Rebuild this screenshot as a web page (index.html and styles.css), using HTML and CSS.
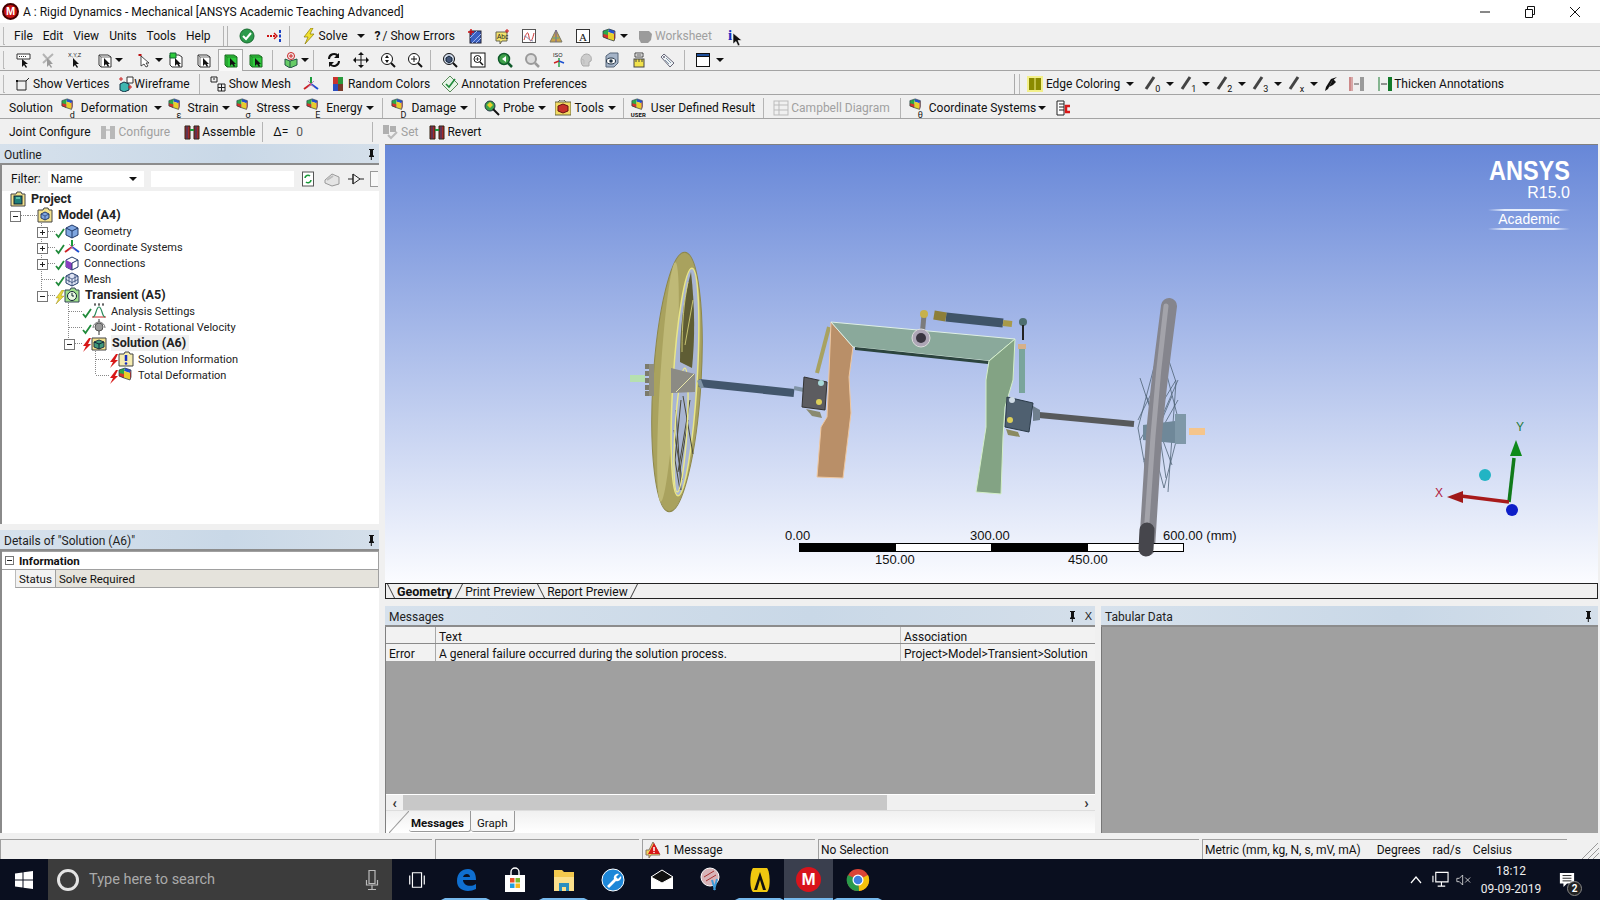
FILE: index.html
```html
<!DOCTYPE html>
<html lang="en">
<head>
  <meta charset="UTF-8">
  <title>A : Rigid Dynamics - Mechanical</title>
  <link rel="stylesheet" href="styles.css">
</head>
<body>
<svg class="defs" aria-hidden="true">
  <symbol id="check" viewBox="0 0 16 16"><circle cx="8" cy="8" r="7" fill="#2c9a4b" stroke="#176b2f"/><path d="M4 8l3 3 5-6" fill="none" stroke="#fff" stroke-width="2"/></symbol>
  <symbol id="link" viewBox="0 0 16 16"><path d="M1 8h9" stroke="#c11" stroke-width="2" stroke-dasharray="2 1"/><path d="M8 5l3 3-3 3" fill="none" stroke="#c11" stroke-width="1.4"/><path d="M13 2h2v3h-2zM13 6.500h2v3h-2zM13 11h2v3h-2z" fill="#1a3fc4"/></symbol>
  <symbol id="bolt" viewBox="0 0 16 16"><path d="M10 0 3 9h4l-3 7 9-10H9l3-6z" fill="#f0e030" stroke="#8a7a00" stroke-width=".7"/></symbol>
  <symbol id="hatch" viewBox="0 0 16 16"><rect x="3" y="3" width="11" height="12" fill="#3a5fc0" stroke="#223"/><path d="M5 15l9-9M3 10l7-7M9 15l5-5" stroke="#9fb6ee"/><path d="M1 4h6M4 1v6" stroke="#c11" stroke-width="1.400"/></symbol>
  <symbol id="abc" viewBox="0 0 16 16"><path d="M1 4h11v9H7l-2 3v-3H1z" fill="#f3e46a" stroke="#665"/><path d="M12 1v4M10 3h4" stroke="#c11"/><text x="2" y="11" font-size="6.500" font-family="Liberation Sans" fill="#222">Abc</text></symbol>
  <symbol id="chart" viewBox="0 0 16 16"><rect x="1.500" y="1.500" width="13" height="13" fill="#fff" stroke="#555"/><path d="M3 12c3-9 4-9 5-3s3 5 5-4" fill="none" stroke="#c33"/><path d="M3 8c3 0 5 5 9 5" fill="none" stroke="#88a"/></symbol>
  <symbol id="pyr" viewBox="0 0 16 16"><path d="M8 2 2 14h12z" fill="#c9a24a" stroke="#776"/><path d="M8 2v12" stroke="#6a5ca8"/><path d="M5 10h6" stroke="#5a8"/></symbol>
  <symbol id="abox" viewBox="0 0 16 16"><rect x="1.500" y="1.500" width="13" height="13" fill="#fff" stroke="#333"/><text x="4" y="12.500" font-size="11" font-family="Liberation Serif" fill="#111">A</text></symbol>
  <symbol id="cube" viewBox="0 0 16 16"><path d="M7 1l6 2-1 3-6-2z" fill="#2550d0"/><path d="M6 4l6 2v7l-6-2z" fill="#e7cf2b"/><path d="M1 3l6-2-1 3v7L1 9z" fill="#2ba84a"/><path d="M1 6l5 1v4L1 9z" fill="#d5342c"/><path d="M12 6l1-3v7l-1 3z" fill="#d5342c"/><path d="M7 1l6 2v7l-1 3-6-2-5-2V3z" fill="none" stroke="#234" stroke-width=".7"/></symbol>
  <symbol id="blob" viewBox="0 0 16 16"><path d="M2 3h10l3 3-1 6-3 3H4l-2-4z" fill="#9b9b9b"/></symbol>
  <symbol id="cursor" viewBox="0 0 10 14"><path d="M1 0v11l3-2.500 2 4.500 2-1-2-4.500h4z" fill="#111" stroke="#fff" stroke-width=".6"/></symbol>
  <symbol id="pick100" viewBox="0 0 16 16"><path d="M1 2h13v5H1z" fill="#fff" stroke="#333"/><path d="M3 4.500h8" stroke="#333" stroke-dasharray="1 1"/><path d="M6 7v8l2-2 2 3 1-1-2-3h3z" fill="#111"/></symbol>
  <symbol id="extend" viewBox="0 0 16 16"><path d="M3 2l8 9M13 2 3 11" stroke="#b4b4b4" stroke-width="2"/><path d="M7 6v9l2-2 2 3 1-1-2-3h3z" fill="#9a9a9a"/></symbol>
  <symbol id="xyz" viewBox="0 0 16 16"><text x="0" y="5" font-size="5.500" font-family="Liberation Sans" fill="#222">X,Y,Z</text><path d="M5 6v9l2-2 2 3 1-1-2-3h3z" fill="#111"/></symbol>
  <symbol id="sel" viewBox="0 0 16 16"><path d="M2 3h9l3 2v10H4l-2-2z" fill="#fff" stroke="#333"/><path d="M2 3l2 2h10M4 5v10" fill="none" stroke="#333" stroke-width=".7"/><path d="M7 6v8l2-2 2 3 1-1-1-2h2z" fill="#111"/></symbol>
  <symbol id="selg" viewBox="0 0 16 16"><path d="M2 3h9l3 2v10H4l-2-2z" fill="#2ecb3c" stroke="#1a6a20"/><path d="M2 3l2 2h10M4 5v10" fill="none" stroke="#1a6a20" stroke-width=".7"/><path d="M7 6v8l2-2 2 3 1-1-1-2h2z" fill="#111"/></symbol>
  <symbol id="selv" viewBox="0 0 16 16"><path d="M3 2v2" stroke="#b11" stroke-width="3"/><path d="M4 4v10l3-2 2 3 2-1-2-3h3z" fill="#fff" stroke="#222" stroke-width=".8"/></symbol>
  <symbol id="selb" viewBox="0 0 16 16"><path d="M2 3h9l3 2v10H4l-2-2z" fill="#fff" stroke="#333"/><path d="M2 1h6v5H2z" fill="#2ecb3c" stroke="#163"/><path d="M7 6v8l2-2 2 3 1-1-1-2h2z" fill="#111"/></symbol>
  <symbol id="cubesel" viewBox="0 0 16 16"><circle cx="8" cy="4" r="3.500" fill="none" stroke="#c22"/><path d="M8 2v4M6 4h4" stroke="#c22"/><path d="M2 7l5 2 7-2v6l-7 3-5-3z" fill="#6c6" stroke="#254"/><path d="M7 9v7" stroke="#254"/></symbol>
  <symbol id="rot" viewBox="0 0 16 16"><path d="M3 7a5 5 0 0 1 9-3M13 9a5 5 0 0 1-9 3" fill="none" stroke="#111" stroke-width="2"/><path d="M13 1v5H8zM3 15v-5h5z" fill="#111"/></symbol>
  <symbol id="pan" viewBox="0 0 16 16"><path d="M8 1v14M1 8h14" stroke="#111"/><path d="M8 0l3 3H5zM8 16l3-3H5zM0 8l3-3v6zM16 8l-3-3v6z" fill="#111"/></symbol>
  <symbol id="zoomud" viewBox="0 0 16 16"><circle cx="7" cy="7" r="5.500" fill="#fff" stroke="#111"/><path d="M11 11l4 4" stroke="#111" stroke-width="2"/><path d="M7 3l2 3H5zM7 11l2-3H5z" fill="#111"/></symbol>
  <symbol id="zoomp" viewBox="0 0 16 16"><circle cx="7" cy="7" r="5.500" fill="#fff" stroke="#111"/><path d="M11 11l4 4" stroke="#111" stroke-width="2"/><path d="M7 4v6M4 7h6" stroke="#111"/></symbol>
  <symbol id="zfit" viewBox="0 0 16 16"><circle cx="7" cy="7" r="5.500" fill="#cfd9ea" stroke="#111"/><path d="M11 11l4 4" stroke="#111" stroke-width="2"/><path d="M4 6l3-2 3 2v3l-3 2-3-2z" fill="#457" stroke="#123"/></symbol>
  <symbol id="zbox" viewBox="0 0 16 16"><rect x="1" y="1" width="14" height="14" fill="#fff" stroke="#111"/><circle cx="7.500" cy="7" r="3.500" fill="none" stroke="#111"/><path d="M10 10l3 3" stroke="#111" stroke-width="1.500"/><path d="M7.500 5v4M5.500 7h4" stroke="#111" stroke-width=".7"/></symbol>
  <symbol id="zgreen" viewBox="0 0 16 16"><circle cx="7" cy="7" r="5.500" fill="#3fa14a" stroke="#0f5a2a" stroke-width="1.500"/><path d="M11 11l4 4" stroke="#0f5a2a" stroke-width="2.500"/><path d="M9 4 5 7l4 3z" fill="#fff"/></symbol>
  <symbol id="zgray" viewBox="0 0 16 16"><circle cx="7" cy="7" r="5" fill="#dcdcdc" stroke="#9a9a9a" stroke-width="2"/><path d="M11 11l4 4" stroke="#9a9a9a" stroke-width="2.500"/></symbol>
  <symbol id="iso" viewBox="0 0 16 16"><text x="2" y="5" font-size="5.500" font-family="Liberation Sans" fill="#111">ISO</text><path d="M8 6v9" stroke="#1c9c3c" stroke-width="1.400"/><path d="M3 11l5-2" stroke="#c22" stroke-width="1.400"/><path d="M13 11 8 9" stroke="#1a4fd0" stroke-width="1.400"/></symbol>
  <symbol id="head" viewBox="0 0 16 16"><path d="M5 14c-3-3-3-11 3-12 5 0 6 4 5 7l-2 1 0 4z" fill="#ccc" stroke="#aaa"/><path d="M3 7l3 1v4" stroke="#bbb" fill="none"/></symbol>
  <symbol id="eye" viewBox="0 0 16 16"><path d="M2 4l4-3h8v10l-4 4H2z" fill="#a5b4c8" stroke="#56667a"/><ellipse cx="7" cy="9" rx="4.500" ry="3" fill="#fff" stroke="#234"/><circle cx="7" cy="9" r="1.800" fill="#234"/></symbol>
  <symbol id="ruler" viewBox="0 0 16 16"><rect x="3" y="7" width="10" height="8" fill="#f2e24a" stroke="#444"/><path d="M5 7v3M8 7v3M11 7v3" stroke="#444"/><path d="M4 1h8v4H4z" fill="#fff" stroke="#444"/><path d="M5.500 3h5" stroke="#444"/></symbol>
  <symbol id="tag" viewBox="0 0 16 16"><path d="M2 5l3-3 10 9-4 4z" fill="#eef3f6" stroke="#667"/><circle cx="5" cy="5" r="1" fill="#667"/><path d="M7 6l5 5M6 8l4 4" stroke="#89a"/></symbol>
  <symbol id="win" viewBox="0 0 16 16"><rect x="1.500" y="1.500" width="13" height="13" fill="#fff" stroke="#111"/><rect x="1.500" y="1.500" width="13" height="3" fill="#1d4f9c" stroke="#111"/></symbol>
  <symbol id="vertex" viewBox="0 0 16 16"><path d="M3 5h9v9H3zM12 5l3-3" fill="none" stroke="#222"/><rect x="2" y="4" width="2" height="2" fill="#111"/></symbol>
  <symbol id="wire" viewBox="0 0 16 16"><path d="M9 1h6v6H9z" fill="#fff" stroke="#333"/><path d="M2 8l4-2 5 2v6l-5 2-4-2z" fill="#3fb6b0" stroke="#134"/><path d="M3 1v4M1 3h4M12 9v4M10 11h4" stroke="#c22"/></symbol>
  <symbol id="mesh" viewBox="0 0 16 16"><path d="M1 1h6v5H1z" fill="none" stroke="#222"/><path d="M3 3h2" stroke="#222"/><path d="M8 8h7v7H8zM11.500 8v7M8 11.500h7" fill="none" stroke="#222"/></symbol>
  <symbol id="star" viewBox="0 0 16 16"><path d="M8 1v7" stroke="#1c9c3c" stroke-width="2"/><path d="M8 8l-7 5" stroke="#c22" stroke-width="2"/><path d="M8 8l7 5" stroke="#1a4fd0" stroke-width="2"/><path d="M5 5l3 3 3-3M4 12l4-4 4 4" fill="none" stroke="#b6a" stroke-width=".8"/></symbol>
  <symbol id="random" viewBox="0 0 16 16"><path d="M3 1h5v7H3z" fill="#c9342e"/><path d="M8 1h5v7H8z" fill="#2a9a3c"/><path d="M3 8h5v7H3z" fill="#2a4ec0"/><path d="M8 8h5v7H8z" fill="#7a3a2a"/></symbol>
  <symbol id="annot" viewBox="0 0 16 16"><path d="M8 0l8 8-8 8-8-8z" fill="#e6f4e6" stroke="#5a8a5a"/><path d="M4 8l3 3 6-8" fill="none" stroke="#1f8a3a" stroke-width="1.600"/></symbol>
  <symbol id="edge" viewBox="0 0 16 16"><rect x="0" y="0" width="16" height="16" fill="#f3f08a"/><rect x="2" y="2" width="12" height="12" fill="#8a8a00"/><path d="M8 2v12" stroke="#f3f08a"/></symbol>
  <symbol id="slash" viewBox="0 0 16 16"><path d="M3 15 11 3" stroke="#444" stroke-width="3"/></symbol>
  <symbol id="pin" viewBox="0 0 16 16"><path d="M14 1 9 5 5 13l-3 2 1-4 5-8z" fill="#111"/><path d="M10 3l3 3-3 3-4 2z" fill="#111"/></symbol>
  <symbol id="thick1" viewBox="0 0 16 16"><path d="M2 1v14" stroke="#a22" stroke-width="1"/><path d="M4 1v14" stroke="#a22" stroke-width=".7"/><path d="M6 8h5" stroke="#555"/><path d="M13 1v14M15 1v14" stroke="#444"/></symbol>
  <symbol id="thick2" viewBox="0 0 16 16"><path d="M1 1v14" stroke="#1a7a30"/><path d="M3 8h6" stroke="#333"/><rect x="10" y="1" width="4" height="14" fill="#127a2a"/></symbol>
  <symbol id="probe" viewBox="0 0 16 16"><circle cx="6" cy="6" r="5" fill="#3ca24a" stroke="#234"/><path d="M3 5l3-3 3 3-3 3z" fill="#e7cf2b"/><path d="M9 9l6 6" stroke="#111" stroke-width="2"/></symbol>
  <symbol id="toolbox" viewBox="0 0 16 16"><rect x="0" y="2" width="16" height="13" fill="#f2da62" stroke="#664"/><path d="M3 2l2-2h4l2 2" fill="none" stroke="#664"/><path d="M8 4l5 2v5l-5 2-5-2V6z" fill="#c7322a" stroke="#611"/></symbol>
  <symbol id="campbell" viewBox="0 0 16 16"><rect x="1" y="1" width="14" height="14" fill="none" stroke="#bbb"/><path d="M1 5h14M1 10h14M6 1v14" stroke="#bbb"/></symbol>
  <symbol id="cflag" viewBox="0 0 16 16"><path d="M2 1h7v14H2z" fill="#fff" stroke="#222"/><path d="M4 4h5M4 7h5M4 10h5" stroke="#222"/><path d="M15 6h-4v6h4" fill="none" stroke="#d81818" stroke-width="2.500"/></symbol>
  <symbol id="pair" viewBox="0 0 16 16"><path d="M1 2h5v13H1zM10 2h5v13h-5z" fill="#a22a2a" stroke="#321"/><path d="M6 6h4" stroke="#1a9a3a" stroke-width="2"/><path d="M3 2v13M12 2v13" stroke="#1f3f7a"/></symbol>
  <symbol id="pairg" viewBox="0 0 16 16"><path d="M1 2h5v13H1zM10 2h5v13h-5z" fill="#b8b8b8"/><path d="M6 6h4" stroke="#ccc" stroke-width="2"/></symbol>
  <symbol id="setg" viewBox="0 0 16 16"><path d="M1 1h6v9H1zM8 2h6v6H8z" fill="#b0b0b0"/><path d="M6 11l3 3 6-6" fill="none" stroke="#bbb" stroke-width="2"/></symbol>
  <symbol id="refresh" viewBox="0 0 16 16"><rect x="2.500" y="1" width="11" height="14" fill="#fff" stroke="#555"/><path d="M5 7a3 3 0 0 1 5-2M11 9a3 3 0 0 1-5 2" fill="none" stroke="#1a9a3a" stroke-width="1.600"/></symbol>
  <symbol id="eraser" viewBox="0 0 16 16"><path d="M1 9l7-6 7 3v7l-7 2-7-3z" fill="#e4e4e4" stroke="#999"/><path d="M3 9l6-4" stroke="#bbb" stroke-width="2"/></symbol>
  <symbol id="gate" viewBox="0 0 16 16"><path d="M5 3l7 5-7 5z" fill="none" stroke="#222"/><path d="M0 8h5M12 8h4M5 3v10" stroke="#222"/></symbol>
  <symbol id="pushp" viewBox="0 0 10 12"><path d="M3 1h5v1H7v5l1 1v1H5.800v3h-1V9H3V8l1-1V2H3z" fill="#111"/></symbol>
  <symbol id="tproj" viewBox="0 0 16 16"><path d="M1 3h5l1-2h4l1 2h3v12H1z" fill="#f3e28c" stroke="#444"/><rect x="4" y="5" width="8" height="8" fill="#1f7f7a" stroke="#123"/><path d="M6 7h4" stroke="#9fd"/></symbol>
  <symbol id="tmodel" viewBox="0 0 16 16"><path d="M1 3h5l1-2h4l1 2h3v12H1z" fill="#f3e28c" stroke="#444"/><path d="M4 7l4-2 4 2v4l-4 2-4-2z" fill="#7fa6e0" stroke="#223a6a"/><path d="M4 7l4 2 4-2M8 9v4" fill="none" stroke="#223a6a" stroke-width=".7"/></symbol>
  <symbol id="ttrans" viewBox="0 0 16 16"><path d="M1 3h5l1-2h4l1 2h3v12H1z" fill="#9fe08a" stroke="#345"/><circle cx="8" cy="9" r="4.500" fill="#e8f8e0" stroke="#123"/><path d="M8 6v3h2" fill="none" stroke="#123"/></symbol>
  <symbol id="tick" viewBox="0 0 10 10"><path d="M1 6l2.500 3L9 1" fill="none" stroke="#1f8a3a" stroke-width="1.800"/></symbol>
  <symbol id="boltt" viewBox="0 0 10 14"><path d="M7 0 1 8h3l-3 6 8-8H6l3-6z" fill="#e8d83a" stroke="#8a7a00" stroke-width=".4"/></symbol>
  <symbol id="boltr" viewBox="0 0 10 14"><path d="M7 0 1 8h3l-3 6 8-8H6l3-6z" fill="#d81818"/></symbol>
  <symbol id="tcube" viewBox="0 0 16 16"><path d="M2 5l6-3 6 3v7l-6 3-6-3z" fill="#7fa6e0" stroke="#223a6a"/><path d="M2 5l6 3 6-3M8 8v7" fill="none" stroke="#223a6a"/></symbol>
  <symbol id="tmesh" viewBox="0 0 16 16"><path d="M2 5l6-3 6 3v7l-6 3-6-3z" fill="#dfe4f4" stroke="#223a6a"/><path d="M2 5l6 3 6-3M8 8v7M5 3.500v8M11 3.500v8M2 8.500l6 3 6-3" fill="none" stroke="#223a6a" stroke-width=".7"/></symbol>
  <symbol id="tconn" viewBox="0 0 16 16"><path d="M2 5l6-3 6 3v7l-6 3-6-3z" fill="#fff" stroke="#223a6a"/><path d="M2 5l6 3v7l-6-3z" fill="#8a3fc0"/><path d="M8 8l6-3M8 8v7" stroke="#223a6a"/></symbol>
  <symbol id="tframe" viewBox="0 0 16 16"><path d="M1 14h14" stroke="#c22"/><path d="M2 14c3 0 3-10 6-10s3 10 6 10" fill="none" stroke="#2a8a5a" stroke-width="1.200"/><path d="M3 1h2M7 1h2M11 1h2M4 1v2M8 1v2M12 1v2" stroke="#333"/></symbol>
  <symbol id="tjoint" viewBox="0 0 16 16"><path d="M2 9a6 6 0 0 1 12 0" fill="none" stroke="#777"/><circle cx="8" cy="8" r="4" fill="#999" stroke="#555"/><path d="M8 0v3M8 12v4" stroke="#333"/></symbol>
  <symbol id="tsol" viewBox="0 0 16 16"><path d="M1 3h14v12H1z" fill="#f3e28c" stroke="#444"/><path d="M8 5l5 2v5l-5 2-5-2V7z" fill="#3f9a7a" stroke="#234"/><path d="M3 7l5 2 5-2M8 9v5" fill="none" stroke="#123"/></symbol>
  <symbol id="tinfo" viewBox="0 0 16 16"><path d="M1 3h5l1-2h4l1 2h3v12H1z" fill="#f6ecb0" stroke="#444"/><path d="M8 4v6" stroke="#1a2fc0" stroke-width="2.500"/><circle cx="8" cy="12.500" r="1.300" fill="#1a2fc0"/></symbol>
  <symbol id="warn" viewBox="0 0 16 16"><path d="M1 8h3l4-8 7 13H6l-2 3v-3H1z" fill="#f3d65a" stroke="#876"/><path d="M9 1 3 12h12z" fill="#d81818"/><path d="M9 5v4" stroke="#fff" stroke-width="1.500"/><circle cx="9" cy="10.500" r=".8" fill="#fff"/></symbol>
</svg>

<div class="titlebar">
  <span class="mark">M</span>
  <span class="title">A : Rigid Dynamics - Mechanical [ANSYS Academic Teaching Advanced]</span>
  <div class="winctl">
    <svg viewBox="0 0 12 12"><path d="M1 6h10" stroke="#111"/></svg>
    <svg viewBox="0 0 12 12"><path d="M1.500 3.500h7v8h-7zM3.500 3.500v-3h7v8h-2" fill="none" stroke="#111"/></svg>
    <svg viewBox="0 0 12 12"><path d="M1 1l10 10M11 1 1 11" stroke="#111"/></svg>
  </div>
</div>

<div class="tb">
  <i class="grip"></i>
  <span class="menu">File</span><span class="menu">Edit</span><span class="menu">View</span><span class="menu">Units</span><span class="menu">Tools</span><span class="menu">Help</span>
  <i class="sep ml2"></i><i class="sep"></i>
  <svg class="ic ml8"><use href="#check"/></svg>
  <svg class="ic ml11"><use href="#link"/></svg>
  <i class="sep ml7"></i>
  <svg class="ic ml8"><use href="#bolt"/></svg><span class="ml2">Solve</span><i class="caret ml9"></i>
  <span class="ml10 qm">?</span><span class="ml2">/ Show Errors</span>
  <svg class="ic ml12"><use href="#hatch"/></svg>
  <svg class="ic ml12"><use href="#abc"/></svg>
  <svg class="ic ml10"><use href="#chart"/></svg>
  <svg class="ic ml11"><use href="#pyr"/></svg>
  <svg class="ic ml11"><use href="#abox"/></svg>
  <svg class="ic ml11"><use href="#cube"/></svg><i class="caret ml2"></i>
  <svg class="ic ml9"><use href="#blob"/></svg><span class="off ml2">Worksheet</span>
  <span class="info">i</span><svg class="cursor"><use href="#cursor"/></svg>
</div>

<div class="tb">
  <i class="grip"></i>
  <svg class="ic ml11"><use href="#pick100"/></svg>
  <svg class="ic ml8"><use href="#extend"/></svg>
  <svg class="ic ml12"><use href="#xyz"/></svg>
  <svg class="ic ml13"><use href="#sel"/></svg><i class="caret ml2"></i>
  <svg class="ic ml14"><use href="#selv"/></svg><i class="caret ml2"></i>
  <svg class="ic ml5"><use href="#selb"/></svg>
  <svg class="ic ml12"><use href="#sel"/></svg>
  <span class="pressed"><svg class="ic"><use href="#selg"/></svg></span>
  <svg class="ic ml5"><use href="#selg"/></svg>
  <i class="sep ml8"></i>
  <svg class="ic ml7"><use href="#cubesel"/></svg><i class="caret ml2"></i>
  <i class="sep ml4"></i>
  <svg class="ic ml9"><use href="#rot"/></svg>
  <svg class="ic ml11"><use href="#pan"/></svg>
  <svg class="ic ml11"><use href="#zoomud"/></svg>
  <svg class="ic ml11"><use href="#zoomp"/></svg>
  <i class="sep ml7"></i>
  <svg class="ic ml8"><use href="#zfit"/></svg>
  <svg class="ic ml12"><use href="#zbox"/></svg>
  <svg class="ic ml11"><use href="#zgreen"/></svg>
  <svg class="ic ml11"><use href="#zgray"/></svg>
  <svg class="ic ml11"><use href="#iso"/></svg>
  <svg class="ic ml11"><use href="#head"/></svg>
  <svg class="ic ml10"><use href="#eye"/></svg>
  <svg class="ic ml11"><use href="#ruler"/></svg>
  <svg class="ic ml12"><use href="#tag"/></svg>
  <i class="sep ml9"></i>
  <svg class="ic ml7"><use href="#win"/></svg><i class="caret ml5"></i>
</div>

<div class="tb">
  <i class="grip"></i>
  <svg class="ic ml9"><use href="#vertex"/></svg><span class="ml3">Show Vertices</span>
  <svg class="ic ml9"><use href="#wire"/></svg><span>Wireframe</span>
  <i class="sep ml9"></i>
  <svg class="ic ml7"><use href="#mesh"/></svg><span class="ml3">Show Mesh</span>
  <svg class="ic ml12"><use href="#star"/></svg>
  <svg class="ic ml11"><use href="#random"/></svg><span class="ml2">Random Colors</span>
  <svg class="ic ml12"><use href="#annot"/></svg><span class="ml3">Annotation Preferences</span>
  <span class="push"></span>
  <i class="grip2"></i>
  <svg class="ic ml7"><use href="#edge"/></svg><span class="ml3">Edge Coloring</span><i class="caret ml6"></i>
  <span class="lv ml9"><svg class="ic"><use href="#slash"/></svg><small>0</small></span><i class="caret"></i>
  <span class="lv ml5"><svg class="ic"><use href="#slash"/></svg><small>1</small></span><i class="caret"></i>
  <span class="lv ml5"><svg class="ic"><use href="#slash"/></svg><small>2</small></span><i class="caret"></i>
  <span class="lv ml5"><svg class="ic"><use href="#slash"/></svg><small>3</small></span><i class="caret"></i>
  <span class="lv ml5"><svg class="ic"><use href="#slash"/></svg><small>x</small></span><i class="caret"></i>
  <svg class="ic ml5"><use href="#pin"/></svg>
  <svg class="ic ml9"><use href="#thick1"/></svg>
  <svg class="ic ml14"><use href="#thick2"/></svg><span>Thicken Annotations</span>
  <span class="endpad"></span>
</div>

<div class="tb">
  <span class="ml9">Solution</span>
  <span class="res ml8"><svg class="ic"><use href="#cube"/></svg><small>d</small></span><span>Deformation</span><i class="caret ml6"></i>
  <span class="res ml6"><svg class="ic"><use href="#cube"/></svg><small>&epsilon;</small></span><span>Strain</span><i class="caret ml4"></i>
  <span class="res ml6"><svg class="ic"><use href="#cube"/></svg><small>&sigma;</small></span><span>Stress</span><i class="caret ml2"></i>
  <span class="res ml6"><svg class="ic"><use href="#cube"/></svg><small>E</small></span><span>Energy</span><i class="caret ml4"></i>
  <i class="sep ml8"></i>
  <span class="res ml5"><svg class="ic"><use href="#cube"/></svg><small>D</small></span><span>Damage</span><i class="caret ml4"></i>
  <i class="sep ml7"></i>
  <svg class="ic ml5"><use href="#probe"/></svg><span class="ml3">Probe</span><i class="caret ml4"></i>
  <svg class="ic ml9"><use href="#toolbox"/></svg><span class="ml3">Tools</span><i class="caret ml4"></i>
  <i class="sep ml7"></i>
  <span class="res ml4"><svg class="ic"><use href="#cube"/></svg><small class="tiny">USER</small></span><span>User Defined Result</span>
  <i class="sep ml8"></i>
  <svg class="ic ml6"><use href="#campbell"/></svg><span class="off ml2">Campbell Diagram</span>
  <i class="sep ml10"></i>
  <span class="res ml5"><svg class="ic"><use href="#cube"/></svg><small>&theta;</small></span><span>Coordinate Systems</span><i class="caret ml2"></i>
  <svg class="ic ml9"><use href="#cflag"/></svg>
</div>

<div class="tb last">
  <span class="ml9">Joint Configure</span>
  <svg class="ic ml9"><use href="#pairg"/></svg><span class="off ml3">Configure</span>
  <svg class="ic ml14"><use href="#pair"/></svg><span class="ml2">Assemble</span>
  <i class="sep ml7"></i>
  <span class="ml7">&Delta;=</span><span class="zero">0</span>
  <i class="sep ml69"></i>
  <svg class="ic ml6"><use href="#setg"/></svg><span class="off ml3">Set</span>
  <svg class="ic ml11"><use href="#pair"/></svg><span class="ml2">Revert</span>
</div>

<div class="main">
  <div class="leftcol">
    <section class="outline panel">
      <div class="phead"><span>Outline</span><svg class="pushpin"><use href="#pushp"/></svg></div>
      <div class="filter">
        <span>Filter:</span>
        <div class="select"><span>Name</span><i class="caret"></i></div>
        <div class="search"></div>
        <svg class="ic ml6"><use href="#refresh"/></svg>
        <svg class="ic ml8"><use href="#eraser"/></svg>
        <svg class="ic ml8"><use href="#gate"/></svg>
        <i class="stubbtn"></i>
      </div>
      <div class="tree">
        <div class="row l0"><svg class="ic"><use href="#tproj"/></svg><b>Project</b></div>
        <div class="row"><i class="cell tog minus tail"></i><i class="stub"></i><svg class="ic"><use href="#tmodel"/></svg><b>Model (A4)</b></div>
        <div class="row"><i class="cell"></i><i class="cell tog plus v tail"></i><svg class="st"><use href="#tick"/></svg><svg class="ic"><use href="#tcube"/></svg><span>Geometry</span></div>
        <div class="row"><i class="cell"></i><i class="cell tog plus v tail"></i><svg class="st"><use href="#tick"/></svg><svg class="ic"><use href="#star"/></svg><span>Coordinate Systems</span></div>
        <div class="row"><i class="cell"></i><i class="cell tog plus v tail"></i><svg class="st"><use href="#tick"/></svg><svg class="ic"><use href="#tconn"/></svg><span>Connections</span></div>
        <div class="row"><i class="cell"></i><i class="cell v tail"></i><svg class="st"><use href="#tick"/></svg><svg class="ic"><use href="#tmesh"/></svg><span>Mesh</span></div>
        <div class="row"><i class="cell"></i><i class="cell tog minus vup tail"></i><svg class="st"><use href="#boltt"/></svg><svg class="ic"><use href="#ttrans"/></svg><b>Transient (A5)</b></div>
        <div class="row"><i class="cell"></i><i class="cell"></i><i class="cell v tail"></i><svg class="st"><use href="#tick"/></svg><svg class="ic"><use href="#tframe"/></svg><span>Analysis Settings</span></div>
        <div class="row"><i class="cell"></i><i class="cell"></i><i class="cell v tail"></i><svg class="st"><use href="#tick"/></svg><svg class="ic"><use href="#tjoint"/></svg><span>Joint - Rotational Velocity</span></div>
        <div class="row"><i class="cell"></i><i class="cell"></i><i class="cell tog minus vup tail"></i><svg class="st"><use href="#boltr"/></svg><svg class="ic"><use href="#tsol"/></svg><b class="hl">Solution (A6)</b></div>
        <div class="row"><i class="cell"></i><i class="cell"></i><i class="cell"></i><i class="cell v tail"></i><svg class="st"><use href="#boltr"/></svg><svg class="ic"><use href="#tinfo"/></svg><span>Solution Information</span></div>
        <div class="row"><i class="cell"></i><i class="cell"></i><i class="cell"></i><i class="cell vup tail"></i><svg class="st"><use href="#boltr"/></svg><svg class="ic"><use href="#cube"/></svg><span>Total Deformation</span></div>
      </div>
    </section>
    <section class="details panel">
      <div class="phead"><span>Details of "Solution (A6)"</span><svg class="pushpin"><use href="#pushp"/></svg></div>
      <div class="dgroup"><i class="tog minus"></i><b>Information</b></div>
      <div class="drow"><span class="dkey">Status</span><span class="dval">Solve Required</span></div>
    </section>
  </div>

  <div class="rightcol">
    <section class="view">
      <div class="canvas">
        <svg class="model" viewBox="385 144 1215 439">
          <!-- left wheel -->
          <ellipse cx="677" cy="382" rx="24" ry="130" transform="rotate(3.500 677 382)" fill="#a9a25e" stroke="#8d8749"/>
          <ellipse cx="668" cy="382" rx="8" ry="120" transform="rotate(3.500 668 382)" fill="#bfb977"/>
          <ellipse cx="685" cy="382" rx="12" ry="114" transform="rotate(3.500 685 382)" fill="#a9b5d2" stroke="#e9e688" stroke-width="1.500"/>
          <path d="M691 272c-8 30-11 55-11 90l12 6c3-30 3-60-1-96z" fill="#5f5d34"/>
          <path d="M688 282c-4 20-6 40-6 70M693 300l-8 45" fill="none" stroke="#e0dc80" stroke-width=".8"/>
          <path d="M681 400l-6 60 5 30M690 400l-12 72M683 396l10 58M676 410l5 80M688 420l-8 50M674 430l8 50" fill="none" stroke="#4a4a38"/>
          <ellipse cx="681" cy="430" rx="6" ry="62" transform="rotate(3.500 681 430)" fill="none" stroke="#ece98c" stroke-width="1.400"/>
          <rect x="630" y="375" width="15" height="7" fill="#b6e0b0"/>
          <path d="M645 364h9v5h-9zM645 371h9v5h-9zM645 378h9v5h-9zM645 385h9v5h-9zM645 391h9v5h-9z" fill="#7c7b6c"/>
          <rect x="649" y="364" width="5" height="32" fill="#8f8e80"/>
          <path d="M671 368l24 6v18l-24 1z" fill="#8c8b84"/>
          <path d="M676 392l18-18" stroke="#e9e7a8"/>
          <!-- left shaft -->
          <path d="M699 383l95 10" stroke="#42566c" stroke-width="8"/>
          <path d="M699 380l3 8M794 388l10 2" stroke="#7f93a5" stroke-width="4"/>
          <path d="M829 327l-12 46" stroke="#a8a261" stroke-width="4"/>
          <path d="M804 377l23 5-2 28-23-3z" fill="#5c5c60" stroke="#333"/>
          <circle cx="821" cy="383" r="3" fill="#a8d8d8"/><circle cx="819" cy="402" r="3" fill="#dccf5a"/>
          <path d="M806 409l14 3 2 6-10-2z" fill="#8a8a70"/>
          <!-- frame -->
          <path d="M831 322l22 25-4 30 2 36-8 65-26-1 4-50 6-10 2-44z" fill="#b98f68" stroke="#f0c8a0"/>
          <path d="M831 322l184 17-26 22-136-14z" fill="#8aa99b" stroke="#dff0e6"/>
          <path d="M855 347l134 14-1 3-133-14z" fill="#2c443e"/>
          <path d="M1015 339l-2 41-8 27-2 30-2 57-25-2 10-65v-47l3-19z" fill="#83a384" stroke="#d4efc8"/>
          <!-- steering link -->
          <path d="M946 317l57 6" stroke="#3f5468" stroke-width="9"/>
          <path d="M934 315l12 2" stroke="#8d7f3a" stroke-width="9"/>
          <path d="M1003 323l9 1" stroke="#a89a4a" stroke-width="6"/>
          <path d="M924 315l-2 22" stroke="#7b7b7b" stroke-width="5"/>
          <circle cx="924" cy="314" r="4" fill="#c7b14a"/>
          <circle cx="921" cy="338" r="9" fill="#aea6b6" stroke="#ddd"/>
          <circle cx="921" cy="338" r="5" fill="#3a3540"/>
          <circle cx="1023" cy="322" r="4" fill="#4d6e70"/>
          <path d="M1023 325v15" stroke="#222" stroke-width="2"/>
          <path d="M1022 347v46" stroke="#7aa59c" stroke-width="6"/>
          <rect x="1018" y="344" width="8" height="5" fill="#d6b08a"/>
          <!-- right shaft -->
          <path d="M1039 415l95 9" stroke="#57595b" stroke-width="6"/>
          <path d="M1007 397l26 6-4 29-24-5z" fill="#4f6070" stroke="#2a3a48"/>
          <path d="M1033 406l7 4v10l-7 1z" fill="#6f7f8e"/>
          <circle cx="1012" cy="400" r="3" fill="#d0dce6"/><circle cx="1010" cy="420" r="3" fill="#dccf5a"/>
          <path d="M1006 429l12 3 2 5-12-2z" fill="#8a8a60"/>
          <!-- right wheel -->
          <path d="M1162 356l18 70-16 62-16-60zM1140 378l20 60 6 40M1178 380l-22 50-8 50M1146 395l26 70M1172 396l-28 66M1158 352l-20 76 12 66M1166 352l10 30-8 110M1138 420l30-60M1140 440l36-60M1144 460l34-60" fill="none" stroke="#4f6376" stroke-width=".8"/>
          <path d="M1143 425l40-5v24l-40-4z" fill="#6f8899"/>
          <rect x="1175" y="414" width="11" height="30" fill="#7f98a8"/>
          <path d="M1169 306c-5 40-12 90-15 130l-7 112" fill="none" stroke="#85858d" stroke-width="16" stroke-linecap="round"/>
          <path d="M1166 306c-5 40-10 90-13 130l-7 100" fill="none" stroke="#a3a3aa" stroke-width="5" stroke-linecap="round"/>
          <rect x="1189" y="428" width="16" height="7" fill="#f5c58c"/>
          <!-- scale -->
          <rect x="799.500" y="543.500" width="384" height="8" fill="#fff" stroke="#000"/>
          <rect x="799" y="543" width="97" height="9"/><rect x="991" y="543" width="97" height="9"/>
          <path d="M1147 530l-1 19" stroke="#46464c" stroke-width="15" stroke-linecap="round"/>
          <g class="scale">
            <text x="785" y="540">0.00</text><text x="970" y="540">300.00</text><text x="1163" y="540">600.00 (mm)</text>
            <text x="875" y="564">150.00</text><text x="1068" y="564">450.00</text>
          </g>
          <!-- triad -->
          <path d="M1509 502l5-44" stroke="#117a1a" stroke-width="3.500"/><path d="M1516 440l-6 16h12z" fill="#0e8a1a"/>
          <path d="M1509 502l-48-6" stroke="#a81a1a" stroke-width="3.500"/><path d="M1447 497l16-6v12z" fill="#a01818"/>
          <circle cx="1512" cy="510" r="6" fill="#0e1ec8"/>
          <circle cx="1485" cy="475" r="6" fill="#22b4c4"/>
          <text class="ax-y" x="1516" y="431">Y</text><text class="ax-x" x="1435" y="497">X</text>
        </svg>
        <div class="logo"><div class="ansys">ANSYS</div><div class="rel">R15.0</div><div class="acad">Academic</div></div>
      </div>
      <div class="vtabs">
        <svg viewBox="0 0 10 16"><path d="M1 0l8 16" stroke="#222"/></svg><b>Geometry</b>
        <svg viewBox="0 0 10 16"><path d="M1 16 9 0" stroke="#222"/></svg><span>Print Preview</span>
        <svg viewBox="0 0 10 16"><path d="M1 0l8 16" stroke="#222"/></svg><span>Report Preview</span>
        <svg viewBox="0 0 10 16"><path d="M1 16 9 0" stroke="#222"/></svg>
      </div>
    </section>
    <div class="bottom">
      <section class="messages">
        <div class="phead"><span>Messages</span><svg class="pushpin"><use href="#pushp"/></svg><span class="closex">X</span></div>
        <div class="grid">
          <div class="grow hd"><span class="c1"></span><span class="c2">Text</span><span class="c3">Association</span></div>
          <div class="grow err"><span class="c1">Error</span><span class="c2">A general failure occurred during the solution process.</span><span class="c3">Project&gt;Model&gt;Transient&gt;Solution</span></div>
        </div>
        <div class="hscroll"><span class="arr">&#8249;</span><div class="track"><div class="thumb"></div></div><span class="arr">&#8250;</span></div>
        <div class="mtabs"><i class="slant"></i><b>Messages</b><span>Graph</span></div>
      </section>
      <section class="tabular">
        <div class="phead"><span>Tabular Data</span><svg class="pushpin"><use href="#pushp"/></svg></div>
        <div class="graybox"></div>
      </section>
    </div>
  </div>
</div>

<div class="status">
  <span class="s1"></span><span class="s2"></span>
  <span class="s3"><svg class="ic"><use href="#warn"/></svg>1 Message</span>
  <span class="s4">No Selection</span>
  <span class="s5"><span>Metric (mm, kg, N, s, mV, mA)</span><span>Degrees</span><span>rad/s</span><span>Celsius</span></span>
  <svg class="resize" viewBox="0 0 24 20"><path d="M22 4 6 20M23 9 12 20M23 14l-6 6" stroke="#999"/></svg>
</div>

<div class="taskbar">
  <div class="start"><svg viewBox="0 0 18 18"><path d="M0 2.500 7.500 1.500v7H0zM8.500 1.300 18 0v8.500H8.500zM0 9.500h7.500v7L0 15.500zM8.500 9.500H18V18l-9.500-1.300z" fill="#fff"/></svg></div>
  <div class="searchbox">
    <i class="ring"></i><span>Type here to search</span>
    <svg class="mic" viewBox="0 0 14 22"><path d="M4 1.500h6v13H4zM1.500 11v5h11v-5M7 16v4M3 20.500h8" fill="none" stroke="#bbb" stroke-width="1.200"/></svg>
  </div>
  <div class="tsk"><svg viewBox="0 0 22 22"><path d="M6 3h10v16H6zM3 6v10M19 6v10" fill="none" stroke="#fff" stroke-width="1.300"/></svg></div>
  <div class="tsk on"><svg viewBox="0 0 26 26"><path d="M4 14c0-8 5-12 11-12 6 0 8 5 8 11H10c0 5 7 8 13 4v5c-8 4-19 2-19-8zM10 10h7c0-4-6-4-7 0z" fill="#0f6fd0"/></svg></div>
  <div class="tsk"><svg viewBox="0 0 26 26"><path d="M3 8h20v17H3z" fill="#fff"/><path d="M9 9V5a4 4 0 0 1 8 0v4" fill="none" stroke="#fff" stroke-width="1.400"/><rect x="8" y="11" width="4.500" height="4.500" fill="#e8502a"/><rect x="13.500" y="11" width="4.500" height="4.500" fill="#7ab92c"/><rect x="8" y="16.500" width="4.500" height="4.500" fill="#1f9fe0"/><rect x="13.500" y="16.500" width="4.500" height="4.500" fill="#f7b91c"/></svg></div>
  <div class="tsk on"><svg viewBox="0 0 26 26"><path d="M3 3h8l2 2h10v19H3z" fill="#f3c94e"/><path d="M3 10h20v14H3z" fill="#fbe08c"/><path d="M8 24v-8h10v8h-3v-4h-4v4z" fill="#2a8fc0"/></svg></div>
  <div class="tsk"><svg viewBox="0 0 26 26"><circle cx="13" cy="13" r="11" fill="#1d87d8" stroke="#fff"/><path d="M7 19l7-7c-1-3 2-6 5-5l-3 3 2 2 3-3c1 3-2 6-5 5l-7 7z" fill="#fff"/></svg></div>
  <div class="tsk"><svg viewBox="0 0 26 26"><path d="M2 10 13 3l11 7v12H2z" fill="#fff"/><path d="M2 10l11 6 11-6-11-7z" fill="#111" stroke="#fff"/></svg></div>
  <div class="tsk"><svg viewBox="0 0 26 26"><circle cx="12" cy="10" r="9" fill="#d7b4b8" stroke="#fff"/><path d="M6 10l10-6M8 14l10-6" stroke="#a33"/><path d="M14 13l3 10M19 12l-3 11" stroke="#3a9ad8" stroke-width="2"/></svg></div>
  <div class="tsk on"><svg viewBox="0 0 26 26"><path d="M6 1h14c3 3 4 20 0 24H6C2 21 3 4 6 1z" fill="#f0c810"/><path d="M13 5 7 23h3l3-10 3 10h3z" fill="#111"/></svg></div>
  <div class="tsk cur"><span class="mega">M</span></div>
  <div class="tsk on"><svg viewBox="0 0 26 26"><circle cx="13" cy="13" r="11" fill="#db4437"/><path d="M13 13 23 8a11 11 0 0 1-9 16z" fill="#f4c20d"/><path d="M13 13 14 24A11 11 0 0 1 3 8z" fill="#2a9a4a"/><circle cx="13" cy="13" r="5.500" fill="#fff"/><circle cx="13" cy="13" r="4.300" fill="#3f7fe0"/></svg></div>
  <div class="tray">
    <svg class="t1" viewBox="0 0 12 8"><path d="M1 7l5-6 5 6" fill="none" stroke="#fff" stroke-width="1.200"/></svg>
    <svg class="t2" viewBox="0 0 18 18"><path d="M4 1.500h13v10H4zM1 5v7M10 11.500v4M6 16h8" fill="none" stroke="#fff" stroke-width="1.200"/></svg>
    <svg class="t3" viewBox="0 0 18 14"><path d="M1 5h3l4-4v12l-4-4H1z" fill="none" stroke="#ddd"/><path d="M11 4l6 6M17 4l-6 6" stroke="#ddd"/></svg>
    <div class="tclock"><span>18:12</span><span>09-09-2019</span></div>
    <div class="notif"><svg viewBox="0 0 18 18"><path d="M1 1h16v12H9l-4 4v-4H1z" fill="#fff"/><path d="M4 4h10M4 7h10M4 10h10" stroke="#111"/></svg><span class="badge">2</span></div>
  </div>
</div>
</body>
</html>
```

FILE: styles.css
```css
* { box-sizing: border-box; }
html, body { margin: 0; height: 100%; }
body {
  width: 1600px;
  height: 900px;
  overflow: hidden;
  display: flex;
  flex-direction: column;
  background: #f0f0f0;
  color: #111;
  font: 12px/16px Roboto, "Liberation Sans", sans-serif;
}
.defs { display: none; }
i, small { font-style: normal; }
b { font-weight: 700; }

/* title bar */
.titlebar {
  height: 23px;
  flex: none;
  background: #fff;
  display: flex;
  align-items: center;
  padding-left: 2px;
}
.mark {
  width: 17px;
  height: 17px;
  border-radius: 50%;
  background: #c81414;
  border: 2px solid #400;
  color: #fff;
  font: 700 11px/13px "Liberation Sans", sans-serif;
  text-align: center;
}
.title { margin-left: 4px; font-size: 12px; }
.winctl { margin-left: auto; display: flex; }
.winctl svg { width: 12px; height: 12px; margin-right: 33px; }
.winctl svg:last-child { margin-right: 19px; }

/* toolbars */
.tb {
  height: 24px;
  flex: none;
  display: flex;
  align-items: center;
  padding-top: 2px;
  white-space: nowrap;
  background: #f0f0f0;
  border-bottom: 1px solid #a4a4a4;
}
.tb.last { height: 25px; padding-top: 0; border-bottom: 0; }
.grip { width: 2px; height: 18px; margin-left: 3px; border-left: 1px solid #bbb; border-bottom: 1px solid #bbb; }
.grip2 { width: 6px; height: 20px; border-left: 1px solid #aaa; border-right: 1px solid #bbb; }
.sep { width: 1px; height: 20px; background: #b4b4b4; margin-right: 3px; flex: none; }
.ic { width: 16px; height: 16px; flex: none; }
.caret { width: 0; height: 0; border: 4px solid transparent; border-top: 4px solid #111; border-bottom: 0; margin-left: 3px; flex: none; }
.menu { margin-right: 10px; }
.menu:first-of-type { margin-left: 9px; }
.off { color: #a0a0a0; }
.qm { font-weight: 700; }
.info { margin-left: 16px; color: #1b2fc0; font: 700 15px "Liberation Serif", serif; }
.cursor { width: 10px; height: 14px; margin-top: 8px; }
.pressed { margin-left: 6px; width: 25px; height: 22px; display: flex; align-items: center; justify-content: center; border: 1px solid #aaa; border-bottom: 0; background: #f8f8f8; }
.push { flex: 1; }
.endpad { width: 96px; }
.lv, .res { position: relative; display: inline-flex; flex: none; width: 20px; height: 20px; }
.lv small { position: absolute; right: 3px; bottom: 0; font-size: 9px; line-height: 10px; }
.res small { position: absolute; left: 9px; bottom: -2px; font-size: 9px; line-height: 10px; }
.res small.tiny { left: 0; font-size: 6px; font-weight: 700; }
.res .ic { width: 14px; height: 14px; }
.zero { margin-left: 8px; color: #555; }
.ml2 { margin-left: 2px; } .ml3 { margin-left: 3px; } .ml4 { margin-left: 4px; } .ml5 { margin-left: 5px; }
.ml6 { margin-left: 6px; } .ml7 { margin-left: 7px; } .ml8 { margin-left: 8px; } .ml9 { margin-left: 9px; }
.ml10 { margin-left: 10px; } .ml11 { margin-left: 11px; } .ml12 { margin-left: 12px; } .ml13 { margin-left: 13px; }
.ml14 { margin-left: 14px; } .ml69 { margin-left: 69px; }

/* main area */
.main {
  flex: 1;
  min-height: 0;
  display: grid;
  grid-template-columns: 385px 1fr;
  padding-bottom: 6px;
}
.leftcol { display: flex; flex-direction: column; gap: 6px; padding-right: 6px; }
.panel { background: #fff; display: flex; flex-direction: column; }
.outline { height: 380px; }
.details { flex: 1; }
.phead {
  height: 21px;
  flex: none;
  display: flex;
  align-items: center;
  padding: 3px 3px 0 4px;
  background: linear-gradient(90deg, #d6e1ec, #c9d8e7 60%, #d4dfea);
  border-bottom: 2px solid #8c8c8c;
  color: #222;
}
.pushpin { margin-left: auto; margin-top: -2px; width: 10px; height: 12px; flex: none; }
.closex { margin-left: 8px; margin-top: -2px; font: 11px "Liberation Sans", sans-serif; }
.panel { border-left: 2px solid #8a8a8a; }
.panel .phead { margin-left: -2px; }

.filter {
  height: 26px;
  flex: none;
  display: flex;
  align-items: center;
  padding: 2px 0 0 9px;
  background: #f0f0f0;
}
.select { margin-left: 7px; width: 96px; height: 16px; background: #fff; display: flex; justify-content: space-between; align-items: center; padding: 0 7px 0 3px; }
.search { margin-left: 7px; width: 143px; height: 16px; background: #fff; }
.stubbtn { margin-left: 6px; width: 8px; height: 16px; border: 1px solid #999; border-right: 0; background: #f8f8f8; }

/* outline tree */
.tree { flex: 1; font-size: 11px; }
.row { height: 16px; display: flex; align-items: center; color: #222; white-space: nowrap; }
.row > span, .row > b { margin-left: 4px; }
.row > span { padding-top: 2px; }
.row > b { margin-left: 5px; font-size: 12.500px; }
.row.l0 { padding-left: 8px; }
.cell { width: 27px; height: 16px; flex: none; position: relative; }
.row > .cell:first-child { margin-left: -1px; }
.stub { width: 9px; height: 16px; flex: none; background: repeating-linear-gradient(90deg, #888 0 1px, transparent 1px 2px) 0 8px / 100% 1px no-repeat; }
.v { background: repeating-linear-gradient(#888 0 1px, transparent 1px 2px) 13px 0 / 1px 100% no-repeat; }
.vup { background: repeating-linear-gradient(#888 0 1px, transparent 1px 2px) 13px 0 / 1px 8px no-repeat; }
.tail::after { content: ""; position: absolute; left: 14px; right: 0; top: 8px; height: 1px; background: repeating-linear-gradient(90deg, #888 0 1px, transparent 1px 2px); }
.cell.tog::before { content: ""; position: absolute; left: 9px; top: 4px; width: 9px; height: 9px; z-index: 1; border: 1px solid #777; }
.cell.tog.minus::before { background: linear-gradient(#222, #222) center / 5px 1px no-repeat #fff; }
.cell.tog.plus::before { background: linear-gradient(#222, #222) center / 5px 1px no-repeat, linear-gradient(#222, #222) center / 1px 5px no-repeat, #fff; }
.st { width: 10px; height: 14px; flex: none; margin-top: 3px; margin-right: -1px; }
.row .hl { margin-left: 4px; background: #f0f0f0; padding: 0 3px 0 1px; }

/* details */
.dgroup { height: 19px; display: flex; align-items: center; border-bottom: 1px solid #a0a0a0; border-top: 1px solid #a0a0a0; border-right: 1px solid #a0a0a0; font-size: 11.500px; }
.dgroup .tog { width: 9px; height: 9px; margin: 0 5px 0 3px; border: 1px solid #777; background: linear-gradient(#222, #222) center / 5px 1px no-repeat #fff; flex: none; }
.drow { height: 18px; margin-left: 13px; display: flex; border-bottom: 1px solid #a0a0a0; border-left: 1px solid #bbb; border-right: 1px solid #a0a0a0; font-size: 11.500px; }
.dkey { width: 40px; padding: 1px 0 0 3px; background: #f2f2f2; border-right: 1px solid #a0a0a0; }
.dval { flex: 1; padding: 1px 0 0 3px; background: #e5e3dc; }

/* viewport */
.rightcol { display: flex; flex-direction: column; gap: 7px; min-width: 0; padding-right: 2px; }
.view { height: 455px; flex: none; display: flex; flex-direction: column; }
.canvas {
  flex: 1;
  position: relative;
  overflow: hidden;
  border-top: 1px solid #808080;
  background: linear-gradient(#6787d8, #fbfcff);
}
.model { position: absolute; left: 0; top: -1px; width: 1215px; height: 439px; }
.scale text { font: 13px "Liberation Sans", sans-serif; fill: #111; }
.ax-y { font: 12px "Liberation Sans", sans-serif; fill: #1f7a3a; }
.ax-x { font: 12px "Liberation Sans", sans-serif; fill: #b02040; }
.logo { position: absolute; right: 28px; top: 13px; width: 110px; color: #fff; text-align: right; font-family: "Liberation Sans", sans-serif; }
.ansys { font-size: 28px; line-height: 26px; font-weight: 700; transform: scaleX(.84); transform-origin: right; }
.rel { font-size: 16px; line-height: 18px; }
.acad {
  margin: 7px 0 0 auto;
  padding: 2px 0;
  font-size: 14px;
  line-height: 17px;
  text-align: center;
  width: 82px;
  background:
    linear-gradient(90deg, transparent, #e6eefc 20%, #e6eefc 80%, transparent) top / 100% 2px no-repeat,
    linear-gradient(90deg, transparent, #e6eefc 20%, #e6eefc 80%, transparent) bottom / 100% 2px no-repeat;
}
.vtabs {
  height: 16px;
  flex: none;
  display: flex;
  align-items: center;
  border: 1px solid #222;
  background: #f0f0f0;
}
.vtabs svg { width: 10px; height: 14px; flex: none; }
.vtabs b, .vtabs span { padding: 1px 1px 0; }
.vtabs b { padding-right: 2px; font-size: 12.500px; }

/* messages and tabular */
.bottom { flex: 1; min-height: 0; display: grid; grid-template-columns: 710px 1fr; gap: 6px; }
.messages { display: flex; flex-direction: column; border-left: 1px solid #808080; min-height: 0; }
.messages .phead { margin-left: -1px; padding-right: 3px; }
.grid { flex: 1; background: #a0a0a0; }
.grow { height: 17px; display: flex; background: #f2f2f2; border-bottom: 1px solid #a0a0a0; }
.grow > span { padding-top: 2px; }
.grow.hd { border-bottom-color: #8a8a8a; }
.grow.err { height: 18px; }
.c1 { width: 50px; padding-left: 3px; border-right: 1px solid #a8a8a8; }
.c2 { width: 465px; padding-left: 3px; border-right: 1px solid #c0c0c0; }
.c3 { flex: 1; padding-left: 3px; white-space: nowrap; }
.hscroll { height: 17px; flex: none; display: flex; align-items: center; background: #f0f0f0; border-top: 1px solid #fff; border-bottom: 1px solid #ddd; }
.arr { width: 17px; text-align: center; font-size: 15px; font-weight: 700; line-height: 14px; color: #333; }
.track { flex: 1; height: 15px; }
.thumb { width: 484px; height: 15px; background: #c8c8c8; }
.mtabs { height: 22px; flex: none; display: flex; align-items: stretch; background: linear-gradient(#f0f0f0, #fff); font-size: 11.500px; }
.mtabs .slant { width: 20px; flex: none; margin-left: 3px; background: linear-gradient(to top right, transparent calc(50% - 1px), #999 50%, transparent calc(50% + 1px)); transform: scaleX(-1); }
.mtabs b, .mtabs span { padding: 4px 6px 0; margin-bottom: 1px; border-right: 1px solid #999; border-bottom: 1px solid #999; border-radius: 0 0 3px 3px; }
.mtabs b { padding-left: 2px; }
.mtabs span { background: #f6f6f6; }
.tabular { display: flex; flex-direction: column; min-height: 0; }
.tabular .phead { padding-right: 5px; }
.graybox { flex: 1; background: #a0a0a0; border-left: 1px solid #777; }

/* status bar */
.status { height: 20px; flex: none; display: flex; background: #f0f0f0; position: relative; }
.status > span { border-top: 1px solid #a0a0a0; border-left: 1px solid #a0a0a0; padding-left: 2px; display: flex; align-items: center; margin-right: 3px; white-space: nowrap; }
.s1 { width: 432px; }
.s2 { width: 204px; }
.s3 { width: 173px; }
.s4 { width: 381px; }
.s5 { width: 365px; margin-right: 0; }
.s3 .ic { margin-right: 3px; }
.s5 span { margin-right: 12px; }
.s5 span:first-child { margin-right: 16px; }
.resize { position: absolute; right: 0; top: 0; width: 24px; height: 20px; }

/* taskbar */
.taskbar { height: 41px; flex: none; display: flex; align-items: stretch; background: #0a0f1f; color: #fff; }
.start { width: 48px; padding-top: 1px; display: flex; align-items: center; justify-content: center; }
.start svg { width: 18px; height: 18px; }
.searchbox { width: 344px; background: #3c3c3c; display: flex; align-items: center; padding: 1px 0 0 9px; color: #aaa; font-size: 14.500px; }
.ring { width: 22px; height: 22px; border: 3px solid #e4e4e4; border-radius: 50%; flex: none; margin-right: 10px; }
.mic { width: 14px; height: 22px; margin-left: auto; margin-right: 13px; }
.tsk { width: 49px; padding-top: 2px; display: flex; align-items: center; justify-content: center; border-bottom: 2px solid transparent; border-left: 4px solid transparent; border-right: 4px solid transparent; background-clip: padding-box; }
.tsk svg { width: 26px; height: 26px; }
.tsk:nth-child(3) svg { width: 20px; height: 20px; }
.tsk.on { border-bottom-color: #76b9ed; }
.tsk.cur { background: #3a3f4e; border-left: 0; border-right: 0; border-bottom-color: #76b9ed; }
.mega { width: 25px; height: 25px; border-radius: 50%; background: #d8141c; color: #fff; font: 700 17px/25px "Liberation Sans", sans-serif; text-align: center; }
.tray { margin-left: auto; padding-right: 12px; display: flex; align-items: center; }
.t1 { width: 12px; height: 8px; margin-right: 10px; }
.t2 { width: 17px; height: 17px; margin-right: 7px; }
.t3 { width: 15px; height: 12px; margin-right: 5px; }
.tclock { width: 70px; display: flex; flex-direction: column; align-items: center; font-size: 12px; line-height: 18px; color: #eee; white-space: nowrap; }
.notif { width: 42px; position: relative; height: 41px; display: flex; align-items: center; justify-content: center; }
.notif svg { width: 16px; height: 16px; }
.badge { position: absolute; right: 6px; bottom: 4px; width: 15px; height: 15px; border-radius: 50%; background: #222; border: 1px solid #888; font-size: 10px; line-height: 13px; font-weight: 700; text-align: center; }
```
